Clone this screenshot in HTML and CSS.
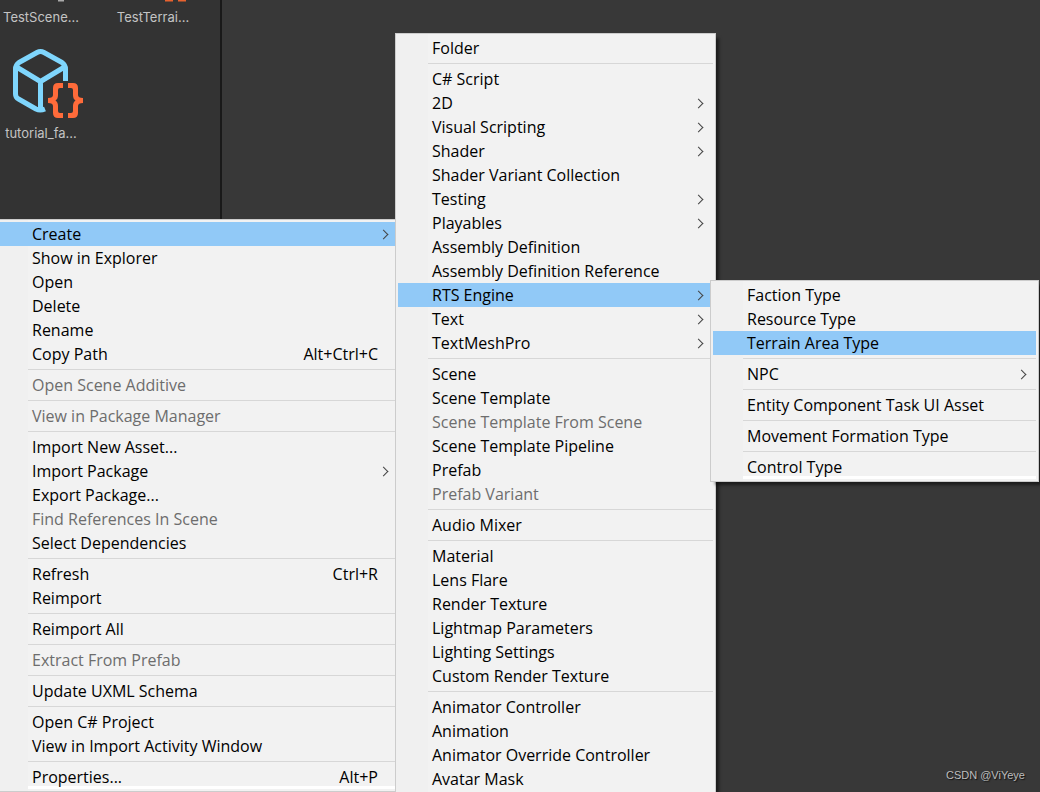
FILE: index.html
```
<!DOCTYPE html>
<html lang="en">
<head>
<meta charset="utf-8">
<title>Project assets</title>
<link rel="stylesheet" href="styles.css">
</head>
<body>
<main class="editor">
  <section class="assets" aria-label="Assets">
    <div class="asset">
      <svg class="icon" viewBox="0 0 80 80" aria-hidden="true"><path d="M57 76H63" fill="none" stroke="#aaa" stroke-width="5"/></svg>
      <span class="caption">TestScene...</span>
    </div>
    <div class="asset">
      <svg class="icon" viewBox="0 0 80 80" aria-hidden="true"><path d="M52 76H60M65 76H73" stroke="#e8622f" stroke-width="5"/></svg>
      <span class="caption">TestTerrai...</span>
    </div>
    <div class="asset">
      <svg class="icon" viewBox="0 0 80 80" aria-hidden="true">
        <g fill="none" stroke="#7fd6fd" stroke-width="5" stroke-linejoin="round">
          <path d="M64.500 42V30Q64.500 26 61 23.500L43 13.500Q39.500 11.500 36 13.500L18 23.500Q14.500 26 14.500 30V55Q14.500 58.500 17.500 60L35 70Q39 72 44 70"/>
          <path d="M15.500 28 39.500 42.500 63.500 28M39.500 42.500V70"/>
        </g>
        <g fill="#ff6b3a">
          <path d="M62 44v5h-3q-2 0-2 2v5q0 4-2.500 5.500 2.500 1.500 2.500 5.500v5q0 2 2 2h3v5h-5q-5 0-5-5v-7q0-3-5-3v-5q5 0 5-3v-7q0-5 5-5z"/>
          <path d="M67 44v5h3q2 0 2 2v5q0 4 2.500 5.500-2.500 1.500-2.500 5.500v5q0 2-2 2h-3v5h5q5 0 5-5v-7q0-3 5-3v-5q-5 0-5-3v-7q0-5-5-5z"/>
        </g>
      </svg>
      <span class="caption">tutorial_fa...</span>
    </div>
  </section>
  <section class="details" aria-label="Details">
    <p class="credit">CSDN @ViYeye</p>
  </section>

  <div class="menu menu-context" role="menu">
    <button class="item active arrow" role="menuitem">Create</button>
    <button class="item" role="menuitem">Show in Explorer</button>
    <button class="item" role="menuitem">Open</button>
    <button class="item" role="menuitem">Delete</button>
    <button class="item" role="menuitem">Rename</button>
    <button class="item" role="menuitem">Copy Path<span class="keys">Alt+Ctrl+C</span></button>
    <hr class="rule">
    <button class="item" role="menuitem" disabled>Open Scene Additive</button>
    <hr class="rule">
    <button class="item" role="menuitem" disabled>View in Package Manager</button>
    <hr class="rule">
    <button class="item" role="menuitem">Import New Asset...</button>
    <button class="item arrow" role="menuitem">Import Package</button>
    <button class="item" role="menuitem">Export Package...</button>
    <button class="item" role="menuitem" disabled>Find References In Scene</button>
    <button class="item" role="menuitem">Select Dependencies</button>
    <hr class="rule">
    <button class="item" role="menuitem">Refresh<span class="keys">Ctrl+R</span></button>
    <button class="item" role="menuitem">Reimport</button>
    <hr class="rule">
    <button class="item" role="menuitem">Reimport All</button>
    <hr class="rule">
    <button class="item" role="menuitem" disabled>Extract From Prefab</button>
    <hr class="rule">
    <button class="item" role="menuitem">Update UXML Schema</button>
    <hr class="rule">
    <button class="item" role="menuitem">Open C# Project</button>
    <button class="item" role="menuitem">View in Import Activity Window</button>
    <hr class="rule">
    <button class="item last" role="menuitem">Properties...<span class="keys">Alt+P</span></button>
  </div>

  <div class="menu menu-create" role="menu">
    <button class="item" role="menuitem">Folder</button>
    <hr class="rule">
    <button class="item" role="menuitem">C# Script</button>
    <button class="item arrow" role="menuitem">2D</button>
    <button class="item arrow" role="menuitem">Visual Scripting</button>
    <button class="item arrow" role="menuitem">Shader</button>
    <button class="item" role="menuitem">Shader Variant Collection</button>
    <button class="item arrow" role="menuitem">Testing</button>
    <button class="item arrow" role="menuitem">Playables</button>
    <button class="item" role="menuitem">Assembly Definition</button>
    <button class="item" role="menuitem">Assembly Definition Reference</button>
    <button class="item active arrow" role="menuitem">RTS Engine</button>
    <button class="item arrow" role="menuitem">Text</button>
    <button class="item arrow" role="menuitem">TextMeshPro</button>
    <hr class="rule">
    <button class="item" role="menuitem">Scene</button>
    <button class="item" role="menuitem">Scene Template</button>
    <button class="item" role="menuitem" disabled>Scene Template From Scene</button>
    <button class="item" role="menuitem">Scene Template Pipeline</button>
    <button class="item" role="menuitem">Prefab</button>
    <button class="item" role="menuitem" disabled>Prefab Variant</button>
    <hr class="rule">
    <button class="item" role="menuitem">Audio Mixer</button>
    <hr class="rule">
    <button class="item" role="menuitem">Material</button>
    <button class="item" role="menuitem">Lens Flare</button>
    <button class="item" role="menuitem">Render Texture</button>
    <button class="item" role="menuitem">Lightmap Parameters</button>
    <button class="item" role="menuitem">Lighting Settings</button>
    <button class="item" role="menuitem">Custom Render Texture</button>
    <hr class="rule">
    <button class="item" role="menuitem">Animator Controller</button>
    <button class="item" role="menuitem">Animation</button>
    <button class="item" role="menuitem">Animator Override Controller</button>
    <button class="item" role="menuitem">Avatar Mask</button>
  </div>

  <div class="menu menu-rts" role="menu">
    <button class="item" role="menuitem">Faction Type</button>
    <button class="item" role="menuitem">Resource Type</button>
    <button class="item active" role="menuitem">Terrain Area Type</button>
    <hr class="rule">
    <button class="item arrow" role="menuitem">NPC</button>
    <hr class="rule">
    <button class="item" role="menuitem">Entity Component Task UI Asset</button>
    <hr class="rule">
    <button class="item" role="menuitem">Movement Formation Type</button>
    <hr class="rule">
    <button class="item last" role="menuitem">Control Type</button>
  </div>
</main>
</body>
</html>
```
FILE: styles.css
```
* { box-sizing: border-box; }
body {
  margin: 0;
  background: #383838;
  font-family: "Open Sans", "Noto Sans", sans-serif;
}
.editor {
  position: relative;
  display: flex;
  height: 100vh;
  overflow: hidden;
}

/* asset browser */
.assets {
  flex: 0 0 222px;
  display: grid;
  grid-template-columns: 80px 80px;
  grid-auto-rows: 108px;
  gap: 8px 32px;
  align-content: start;
  margin-top: -77px;
  padding-left: 1px;
  background: #333;
  border-right: 2px solid #191919;
}
.asset {
  display: flex;
  flex-direction: column;
  align-items: center;
}
.icon {
  width: 80px;
  height: 80px;
  flex: none;
  overflow: visible;
}
.caption {
  margin-top: 5px;
  color: #c4c4c4;
  font: 13px/18px Inter, sans-serif;
  white-space: nowrap;
}
.details {
  flex: 1;
  display: flex;
  align-items: flex-end;
  justify-content: flex-end;
  padding: 8px 15px;
}
.credit {
  margin: 0;
  color: #bdbdbd;
  font: 11px/18px "Liberation Sans", Arial, sans-serif;
  text-shadow: 1px 1px 1px #111;
}

/* pop-up menus */
.menu {
  position: absolute;
  padding: 2px;
  border: 1px solid #ccc;
  background: linear-gradient(to right, #f0f0f0 32px, #f2f2f2 32px);
  box-shadow: 4px 4px 3px -1px rgba(0, 0, 0, .5);
}
.menu-context { left: -5px; top: 219px; width: 406px; }
.menu-create { left: 395px; top: 33px; width: 321px; box-shadow: 4px 4px 3px -1px rgba(0, 0, 0, .5); }
.menu-rts { left: 710px; top: 280px; width: 329px; }

.item {
  display: flex;
  align-items: center;
  width: 100%;
  height: 24px;
  padding: 0 20px 0 34px;
  border: 0;
  background: none;
  color: #000;
  font: 16px/24px "Open Sans", "Noto Sans", sans-serif;
  text-align: left;
  white-space: nowrap;
}
.item:disabled { color: #6d6d6d; }
.item.active { background: #91c9f7; }
.keys { margin-left: auto; }
.arrow { padding-right: 11px; }
.arrow::after {
  content: "";
  width: 6px;
  height: 6px;
  margin-left: auto;
  border: solid #444;
  border-width: 1px 1px 0 0;
  transform: rotate(45deg);
}
.rule {
  height: 1px;
  margin: 3px 0 3px 30px;
  border: 0;
  background: #d7d7d7;
}
.last {
  background: linear-gradient(#fff, #fff) 30px 100% / 100% 3px no-repeat;
}
```
